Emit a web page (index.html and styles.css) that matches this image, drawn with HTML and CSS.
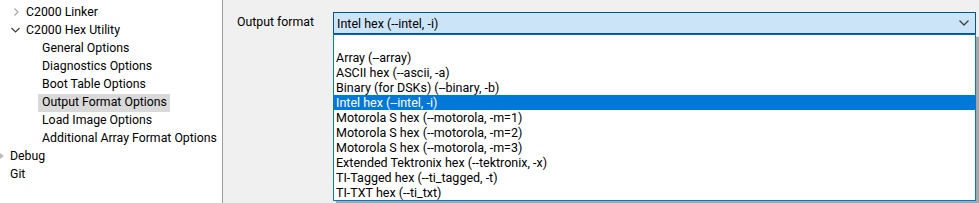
FILE: index.html
```html
<!DOCTYPE html>
<html lang="en">
<head>
  <meta charset="UTF-8" />
  <title>Properties - C2000 Hex Utility</title>
  <link rel="stylesheet" href="styles.css">
</head>
<body>

  <!-- Arbol de opciones -->
  <div class="tree">
    <div class="tree-inner">
      <div class="row lvl1">
        <span class="exp closed"><svg width="8" height="8" viewBox="0 0 8 8"><path d="M2.5 0.5 L6 4 L2.5 7.5" /></svg></span>
        C2000 Linker
      </div>
      <div class="row lvl1">
        <span class="exp open"><svg width="9" height="8" viewBox="0 0 9 8"><path d="M0.5 2 L4.5 6 L8.5 2" /></svg></span>
        C2000 Hex Utility
      </div>
      <div class="row lvl2">General Options</div>
      <div class="row lvl2">Diagnostics Options</div>
      <div class="row lvl2">Boot Table Options</div>
      <div class="row lvl2"><span class="sel">Output Format Options</span></div>
      <div class="row lvl2">Load Image Options</div>
      <div class="row lvl2">Additional Array Format Options</div>
      <div class="row lvl0">
        <span class="exp tri"><svg width="5" height="6" viewBox="0 0 5 6"><path d="M0 0 L4 3 L0 6 Z" /></svg></span>
        Debug
      </div>
      <div class="row lvl0">Git</div>
    </div>
  </div>

  <!-- Panel de opciones -->
  <div class="panel">
    <div class="field">
      <label class="label">Output format</label>
      <div class="combo">
        <div class="combo-box">
          <span>Intel hex (--intel, -i)</span>
          <svg class="arrow" width="10" height="6" viewBox="0 0 10 6"><path d="M0.5 0.5 L5 5 L9.5 0.5" /></svg>
        </div>
        <ul class="dropdown">
          <li>&nbsp;</li>
          <li>Array (--array)</li>
          <li>ASCII hex (--ascii, -a)</li>
          <li>Binary (for DSKs) (--binary, -b)</li>
          <li class="active">Intel hex (--intel, -i)</li>
          <li>Motorola S hex (--motorola, -m=1)</li>
          <li>Motorola S hex (--motorola, -m=2)</li>
          <li>Motorola S hex (--motorola, -m=3)</li>
          <li>Extended Tektronix hex (--tektronix, -x)</li>
          <li>TI-Tagged hex (--ti_tagged, -t)</li>
          <li>TI-TXT hex (--ti_txt)</li>
        </ul>
      </div>
    </div>
  </div>

</body>
</html>
```

FILE: styles.css
```css
body {
  margin: 0;
  width: 979px;
  height: 203px;
  overflow: hidden;
  display: flex;
  font-family: Roboto, "Noto Sans", sans-serif;
  font-size: 12px;
  color: #000;
  background: #f0f0f0;
}

.tree {
  width: 223px;
  height: 203px;
  background: #fff;
  border-right: 1px solid #a0a0a0;
  padding-top: 3px;
  box-sizing: border-box;
  flex-shrink: 0;
  font-size: 12.3px;
}

.tree-inner {
  white-space: nowrap;
}

.row {
  height: 18px;
  line-height: 18px;
  position: relative;
}

.lvl0 { padding-left: 10px; }
.lvl1 { padding-left: 26px; }
.lvl2 { padding-left: 42px; }

.exp {
  position: absolute;
  top: 0;
  height: 18px;
  display: flex;
  align-items: center;
}

.exp path {
  fill: none;
  stroke-width: 1.2;
}

.closed { left: 12px; }
.closed path { stroke: #a6a6a6; }

.open { left: 11px; }
.open path { stroke: #404040; }

.tri { left: 0; }
.tri path { fill: #bdbdbd; stroke: none; }

.sel {
  background: #d9d9d9;
  margin-left: -4px;
  padding: 0 3px 1px 4px;
  display: inline-block;
  line-height: 17px;
}

.panel {
  flex: 1;
  padding: 12px 0 0 14px;
}

.field {
  display: flex;
  align-items: flex-start;
}

.label {
  width: 96px;
  line-height: 21px;
  font-size: 12.3px;
}

.combo {
  position: relative;
  width: 643px;
  font-size: 12.5px;
}

.combo-box {
  height: 22px;
  border: 1px solid #005499;
  background: #cce4f7;
  box-sizing: border-box;
  display: flex;
  align-items: center;
  justify-content: space-between;
  padding: 0 6px 0 3px;
}

.arrow path {
  fill: none;
  stroke: #404040;
  stroke-width: 1.3;
}

.dropdown {
  position: absolute;
  top: 22px;
  left: 0;
  width: 643px;
  margin: 0;
  padding: 0;
  list-style: none;
  background: #fff;
  border: 1px solid #0078d7;
  border-top: 1px solid #0067c0;
  box-sizing: border-box;
  box-shadow: 3px 3px 1px rgba(0, 0, 0, 0.3);
}

.dropdown li {
  height: 15px;
  line-height: 15px;
  padding-left: 2px;
  white-space: nowrap;
}

.dropdown li.active {
  background: #0078d7;
  color: #fff;
}
```
